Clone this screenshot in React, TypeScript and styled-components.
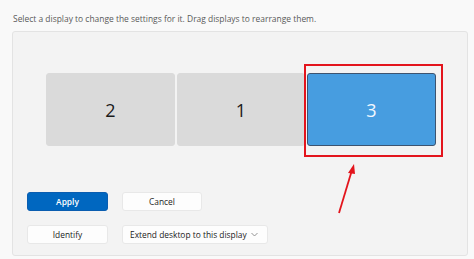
import React from "react";
import styled, { createGlobalStyle } from "styled-components";

const Global = createGlobalStyle`
  html, body { margin: 0; padding: 0; background: #f9f9f9; }
  body { font-family: "Open Sans", "Noto Sans", "Liberation Sans", sans-serif; }
`;

const Page = styled.div`
  width: 474px;
  height: 259px;
  box-sizing: border-box;
  padding: 12px 6px 0 12px;
  display: flex;
  flex-direction: column;
  overflow: hidden;
`;

const Caption = styled.div`
  font-size: 8.45px;
  line-height: 14px;
  color: #5a5a5a;
  height: 14px;
  padding-left: 1px;
  white-space: nowrap;
`;

const Panel = styled.div`
  position: relative;
  margin-top: 5px;
  width: 456px;
  height: 225px;
  box-sizing: border-box;
  background: #f3f3f3;
  border: 1px solid #e3e3e3;
  border-radius: 3px;
  padding: 41px 0 0 14px;
  display: flex;
  flex-direction: column;
`;

const Displays = styled.div`
  display: flex;
  gap: 2px;
  padding-left: 19px;
  height: 73px;
`;

const Tile = styled.div<{ $w: number; $active?: boolean }>`
  width: ${(p) => p.$w}px;
  height: 73px;
  box-sizing: border-box;
  border-radius: 3px;
  background: ${(p) => (p.$active ? "#479de0" : "#dadada")};
  border: 1px solid ${(p) => (p.$active ? "#3d5470" : "#dadada")};
  display: flex;
  align-items: center;
  justify-content: center;
  font-size: 18px;
  color: ${(p) => (p.$active ? "#f2f8ff" : "#1b1b1b")};
`;

const Rows = styled.div`
  margin-top: 46px;
  display: flex;
  flex-direction: column;
  gap: 14px;
`;

const Row = styled.div`
  display: flex;
  gap: 14px;
`;

const Button = styled.div<{ $w: number; $primary?: boolean }>`
  width: ${(p) => p.$w}px;
  height: 19px;
  box-sizing: border-box;
  border-radius: 3px;
  background: ${(p) => (p.$primary ? "#0067c0" : "#fdfdfd")};
  border: 1px solid ${(p) => (p.$primary ? "#0a5db0" : "#e8e8e8")};
  color: ${(p) => (p.$primary ? "#ffffff" : "#1b1b1b")};
  font-size: 8.4px;
  font-weight: ${(p) => (p.$primary ? 600 : 400)};
  display: flex;
  align-items: center;
  justify-content: center;
  white-space: nowrap;
`;

const Dropdown = styled(Button)`
  justify-content: space-between;
  padding: 0 9px 0 7px;
`;

const Highlight = styled.div`
  position: absolute;
  left: 291px;
  top: 32px;
  width: 139px;
  height: 93px;
  box-sizing: border-box;
  border: 2px solid #e3141c;
`;

const Arrow = styled.svg`
  position: absolute;
  left: 320px;
  top: 128px;
  overflow: visible;
`;

export default function App() {
  return (
    <>
      <Global />
      <Page>
        <Caption>Select a display to change the settings for it. Drag displays to rearrange them.</Caption>
        <Panel>
          <Displays>
            <Tile $w={129}>2</Tile>
            <Tile $w={128}>1</Tile>
            <Tile $w={129} $active>3</Tile>
          </Displays>
          <Rows>
            <Row>
              <Button $w={81} $primary>Apply</Button>
              <Button $w={80}>Cancel</Button>
            </Row>
            <Row>
              <Button $w={81}>Identify</Button>
              <Dropdown $w={146}>
                <span>Extend desktop to this display</span>
                <svg width="7" height="5" viewBox="0 0 7 5">
                  <path d="M0.5 1 L3.5 4 L6.5 1" fill="none" stroke="#888" strokeWidth="0.9" />
                </svg>
              </Dropdown>
            </Row>
          </Rows>
          <Highlight />
          <Arrow width="30" height="60" viewBox="0 0 30 60">
            <path d="M6 53 L19 10" stroke="#e3141c" strokeWidth="1.8" fill="none" />
            <path d="M21 4 L15 13 L22 14 Z" fill="#e3141c" />
          </Arrow>
        </Panel>
      </Page>
    </>
  );
}
